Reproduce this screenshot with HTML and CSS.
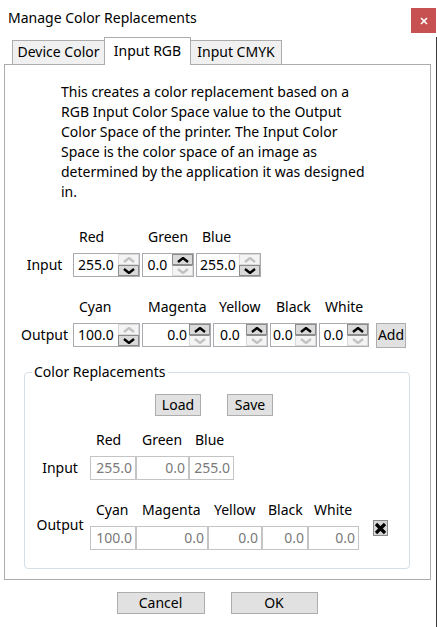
FILE: index.html
```html
<!DOCTYPE html>
<html>
<head>
<meta charset="utf-8">
<title>Manage Color Replacements</title>
<link rel="stylesheet" href="styles.css">
</head>
<body>
<div class="window">
  <div class="titlebar">
    <span class="title">Manage Color Replacements</span>
    <button class="close" aria-label="Close"><svg viewBox="0 0 8 8"><path d="M1 1L7 7M7 1L1 7"/></svg></button>
  </div>
  <div class="main">
    <div class="tabs">
      <div class="tab tab-device">Device Color</div>
      <div class="tab tab-rgb active">Input RGB</div>
      <div class="tab tab-cmyk">Input CMYK</div>
    </div>
    <div class="panel">
      <p class="desc">This creates a color replacement based on a RGB Input Color Space value to the Output Color Space of the printer. The Input Color Space is the color space of an image as determined by the application it was designed in.</p>

      <div class="editor editor-in">
        <span class="hdr">Red</span>
        <span class="hdr">Green</span>
        <span class="hdr">Blue</span>
        <span class="rowlabel">Input</span>
        <div class="spin"><span class="val">255.0</span><span class="btns"><span class="sb"><svg viewBox="0 0 12 6"><path d="M1 5L6 1L11 5"/></svg></span><span class="sb on"><svg viewBox="0 0 12 6"><path d="M1 1L6 5L11 1"/></svg></span></span></div>
        <div class="spin"><span class="val">0.0</span><span class="btns"><span class="sb on"><svg viewBox="0 0 12 6"><path d="M1 5L6 1L11 5"/></svg></span><span class="sb"><svg viewBox="0 0 12 6"><path d="M1 1L6 5L11 1"/></svg></span></span></div>
        <div class="spin"><span class="val">255.0</span><span class="btns"><span class="sb"><svg viewBox="0 0 12 6"><path d="M1 5L6 1L11 5"/></svg></span><span class="sb on"><svg viewBox="0 0 12 6"><path d="M1 1L6 5L11 1"/></svg></span></span></div>
      </div>

      <div class="editor editor-out">
        <span class="hdr">Cyan</span>
        <span class="hdr">Magenta</span>
        <span class="hdr">Yellow</span>
        <span class="hdr">Black</span>
        <span class="hdr">White</span>
        <span class="rowlabel">Output</span>
        <div class="spin"><span class="val">100.0</span><span class="btns"><span class="sb"><svg viewBox="0 0 12 6"><path d="M1 5L6 1L11 5"/></svg></span><span class="sb on"><svg viewBox="0 0 12 6"><path d="M1 1L6 5L11 1"/></svg></span></span></div>
        <div class="spin"><span class="val right">0.0</span><span class="btns"><span class="sb on"><svg viewBox="0 0 12 6"><path d="M1 5L6 1L11 5"/></svg></span><span class="sb"><svg viewBox="0 0 12 6"><path d="M1 1L6 5L11 1"/></svg></span></span></div>
        <div class="spin"><span class="val">0.0</span><span class="btns"><span class="sb on"><svg viewBox="0 0 12 6"><path d="M1 5L6 1L11 5"/></svg></span><span class="sb"><svg viewBox="0 0 12 6"><path d="M1 1L6 5L11 1"/></svg></span></span></div>
        <div class="spin"><span class="val">0.0</span><span class="btns"><span class="sb on"><svg viewBox="0 0 12 6"><path d="M1 5L6 1L11 5"/></svg></span><span class="sb"><svg viewBox="0 0 12 6"><path d="M1 1L6 5L11 1"/></svg></span></span></div>
        <div class="spin"><span class="val">0.0</span><span class="btns"><span class="sb on"><svg viewBox="0 0 12 6"><path d="M1 5L6 1L11 5"/></svg></span><span class="sb"><svg viewBox="0 0 12 6"><path d="M1 1L6 5L11 1"/></svg></span></span></div>
        <button class="btn btn-add">Add</button>
      </div>

      <fieldset class="group">
        <legend>Color Replacements</legend>
        <div class="file-buttons">
          <button class="btn btn-file">Load</button>
          <button class="btn btn-file">Save</button>
        </div>

        <div class="list list-in">
          <span class="hdr">Red</span>
          <span class="hdr">Green</span>
          <span class="hdr">Blue</span>
          <span class="rowlabel">Input</span>
          <span class="ro">255.0</span>
          <span class="ro">0.0</span>
          <span class="ro">255.0</span>
        </div>

        <div class="list list-out">
          <span class="rowlabel span">Output</span>
          <span class="hdr">Cyan</span>
          <span class="hdr">Magenta</span>
          <span class="hdr">Yellow</span>
          <span class="hdr">Black</span>
          <span class="hdr">White</span>
          <span class="ro">100.0</span>
          <span class="ro">0.0</span>
          <span class="ro">0.0</span>
          <span class="ro">0.0</span>
          <span class="ro">0.0</span>
          <button class="del" aria-label="Remove"><svg viewBox="0 0 13 13"><path d="M2 2L11 11M11 2L2 11"/></svg></button>
        </div>
      </fieldset>
    </div>

    <div class="footer">
      <button class="btn btn-cancel">Cancel</button>
      <button class="btn btn-ok">OK</button>
    </div>
  </div>
</div>
</body>
</html>
```

FILE: styles.css
```css
* { box-sizing: border-box; }

html, body {
  margin: 0;
  padding: 0;
  background: #ffffff;
}

body {
  font-family: "Noto Sans", "Open Sans", sans-serif;
  font-size: 14px;
  color: #000;
}

.window {
  width: 437px;
  height: 627px;
  overflow: hidden;
  display: flex;
  flex-direction: column;
}

/* Title bar */
.titlebar {
  height: 37px;
  flex: none;
  display: flex;
  align-items: flex-start;
}

.title {
  padding: 8px 0 0 8px;
  line-height: 20px;
}

.close {
  margin: 8px 1px 0 auto;
  width: 25px;
  height: 25px;
  padding: 0;
  border: 0;
  background: #c75050;
  display: flex;
  align-items: center;
  justify-content: center;
}

.close svg {
  width: 8px;
  height: 8px;
  stroke: #fff;
  stroke-width: 1.7;
  fill: none;
}

.main {
  flex: 1;
  width: 437px;
  border-right: 1px solid #3a3a3a;
}

/* Tabs */
.tabs {
  position: relative;
  z-index: 1;
  height: 27px;
  display: flex;
  align-items: flex-end;
  padding-left: 12px;
}

.tab {
  height: 24px;
  border: 1px solid #acacac;
  border-bottom: 0;
  background: #f0f0f0;
  line-height: 22px;
  text-align: center;
}

.tab + .tab { margin-left: -1px; }

.tab-device { width: 93px; }
.tab-rgb { width: 87px; }
.tab-cmyk { width: 92px; }

.tab.active {
  height: 28px;
  margin-bottom: -1px;
  background: #fff;
  line-height: 26px;
}

/* Panel */
.panel {
  margin-left: 4px;
  width: 427px;
  height: 516px;
  border: 1px solid #acacac;
  padding-top: 17px;
}

.desc {
  margin: 0 0 0 56px;
  width: 312px;
  line-height: 20px;
}

/* Editors */
.editor {
  display: grid;
  grid-template-rows: 20px 24px;
  row-gap: 6px;
  column-gap: 2px;
  align-items: center;
  margin-left: 13px;
}

.editor-in {
  margin-top: 25px;
  grid-template-columns: 53px 67px 52px 65px;
}

.editor-out {
  margin-top: 20px;
  grid-template-columns: 53px 67px 69px 55px 47px 50px 37px;
}

.hdr {
  line-height: 20px;
  padding-left: 6px;
  white-space: nowrap;
}

.editor .hdr:first-child { grid-column: 2; }

.rowlabel {
  grid-column: 1;
  grid-row: 2;
  text-align: center;
  line-height: 20px;
}

.spin {
  grid-row: 2;
  height: 24px;
  display: flex;
  border: 1px solid #a9abb0;
  background: #fff;
}

.spin .val {
  flex: 1;
  line-height: 22px;
  text-align: center;
}

.spin .val.right {
  text-align: right;
  padding-right: 2px;
}

.btns {
  width: 21px;
  display: flex;
  flex-direction: column;
}

.sb {
  flex: 1;
  display: flex;
  align-items: center;
  justify-content: center;
  border: 1px solid #dadada;
  background: #f4f4f4;
}

.sb + .sb { border-top: 0; }

.sb svg {
  width: 12px;
  height: 6px;
  fill: none;
  stroke: #c2c2c2;
  stroke-width: 2.4;
}

.sb.on {
  background: #dadada;
  border-color: #8c8c8c;
}

.sb.on + .sb, .sb + .sb.on { border-top: 1px solid #8c8c8c; }

.sb.on svg { stroke: #000; }

/* Buttons */
.btn {
  height: 22px;
  padding: 0;
  border: 1px solid #adadad;
  background: #e1e1e1;
  font-family: inherit;
  font-size: 14px;
  line-height: 20px;
  color: #000;
}

.btn-add {
  grid-row: 2;
  margin-left: 5px;
  width: 30px;
  height: 25px;
}

.btn-file { width: 46px; }

/* Group box */
.group {
  margin: 15px 0 0 19px;
  width: 386px;
  min-width: 0;
  border: 1px solid #d5dfe5;
  border-radius: 4px;
  padding: 12px 0 18px 5px;
}

.group legend {
  margin-left: 2px;
  padding: 0 2px;
  line-height: 20px;
}

.file-buttons {
  display: flex;
  gap: 26px;
  padding-left: 125px;
}

.list {
  display: grid;
  grid-template-rows: 20px 24px;
  row-gap: 6px;
  align-items: center;
}

.list-in {
  margin-top: 14px;
  grid-template-columns: 60px 46px 53px 45px;
}

.list-in .hdr:first-child { grid-column: 2; }

.list-out {
  margin-top: 20px;
  grid-template-columns: 60px 46px 72px 54px 46px 51px 30px;
}

.rowlabel.span {
  grid-row: 1 / 3;
}

.list-out .hdr:nth-child(2) { grid-column: 2; grid-row: 1; }

.ro {
  grid-row: 2;
  height: 24px;
  border: 1px solid #c4c4c4;
  color: #7a7a7a;
  text-align: right;
  padding-right: 3px;
  line-height: 22px;
}

.del {
  grid-row: 2;
  align-self: start;
  margin: -6px 0 0 14px;
  width: 15px;
  height: 16px;
  padding: 0;
  border: 1px solid #8a8a8a;
  background: #d6d6d6;
  display: flex;
  align-items: center;
  justify-content: center;
}

.del svg {
  flex: none;
  width: 13px;
  height: 13px;
  fill: none;
  stroke: #000;
  stroke-width: 3.2;
}

/* Footer */
.footer {
  margin-top: 12px;
  display: flex;
  justify-content: center;
  gap: 26px;
  padding-right: 2px;
}

.btn-cancel { width: 88px; }
.btn-ok { width: 87px; }
```
